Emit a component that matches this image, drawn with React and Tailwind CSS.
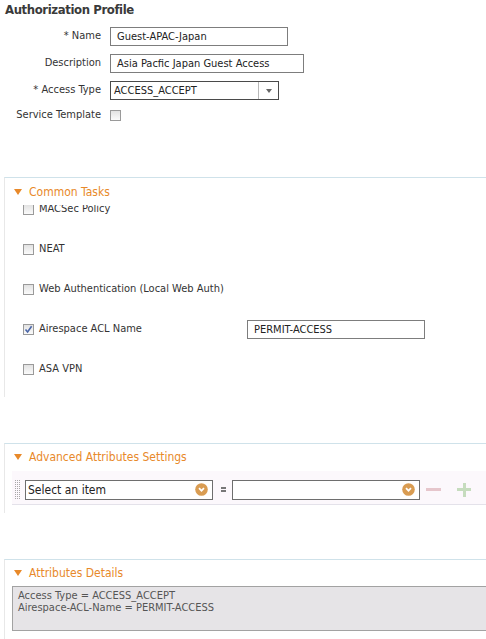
import React from "react";

const font = "font-['DejaVu_Sans_Condensed','DejaVu_Sans',sans-serif]";

const Box = ({ checked }) => (
  <span className="w-[11px] h-[11px] shrink-0 border border-[#9a9a9a] bg-linear-to-b from-[#e2e2e2] to-[#fbfbfb] flex items-center justify-center">
    {checked && (
      <svg width="9" height="9" viewBox="0 0 9 9">
        <path d="M1.5 4.5 L3.6 7 L7.6 1.2" fill="none" stroke="#4a66a8" strokeWidth="1.6" />
      </svg>
    )}
  </span>
);

const Tri = () => (
  <svg width="8" height="6" viewBox="0 0 8 6" className="shrink-0">
    <path d="M0 0 H8 L4 6 Z" fill="#e8892a" />
  </svg>
);

const OrangeArrow = () => (
  <svg width="13" height="13" viewBox="0 0 13 13" className="shrink-0">
    <circle cx="6.5" cy="6.5" r="6.3" fill="#d99c52" />
    <path d="M4 5.2 L6.5 7.7 L9 5.2" fill="none" stroke="#fff" strokeWidth="1.7" />
  </svg>
);

// dotted grip at the left of an attribute row
const Grip = () => (
  <svg width="6" height="20" viewBox="0 0 6 20" className="shrink-0">
    {Array.from({ length: 10 }).map((_, r) =>
      [0, 2, 4].map((c) => (
        <rect key={`${r}-${c}`} x={c} y={r * 2} width="1" height="1" fill="#a8a8a8" />
      ))
    )}
  </svg>
);

const Header = ({ title, tall }) => (
  <div className={`${tall ? "h-[27px]" : "h-[26px]"} flex items-center gap-[7px] pl-[9px] text-[12px] text-[#e8892a]`}>
    <Tri />
    <span>{title}</span>
  </div>
);

const Row = ({ label, children }) => (
  <div className="h-[19px] flex items-center">
    <div className="w-[101px] text-right text-[11px] text-[#333]">{label}</div>
    <div className="ml-[9px] flex items-center">{children}</div>
  </div>
);

const Task = ({ label, checked, children }) => (
  <div className="h-[40px] flex items-center pl-[18px]">
    <Box checked={checked} />
    <span className="ml-[5px] w-[208px] text-[11px] text-[#333]">{label}</span>
    {children}
  </div>
);

export default function App() {
  return (
    <div className={`w-[486px] h-[639px] overflow-hidden bg-white ${font}`}>
      <div className="h-[24px] pl-[5px] pt-[1px] text-[13px] tracking-[-0.4px] font-bold text-[#3a3a3a] leading-[18px]">
        Authorization Profile
      </div>

      <div className="mt-[3px] flex flex-col gap-[8px]">
        <Row label="* Name">
          <div className="w-[178px] h-[19px] border border-[#7d7d7d] px-[6px] text-[11px] leading-[17px] text-[#222]">
            Guest-APAC-Japan
          </div>
        </Row>
        <Row label="Description">
          <div className="w-[194px] h-[19px] border border-[#7d7d7d] px-[6px] text-[11px] leading-[17px] text-[#222]">
            Asia Pacfic Japan Guest Access
          </div>
        </Row>
        <Row label="* Access Type">
          <div className="w-[169px] h-[19px] border border-[#4a4a4a] flex text-[11px] leading-[17px] text-[#222]">
            <span className="flex-1 pl-[3px]">ACCESS_ACCEPT</span>
            <span className="w-[20px] border-l border-[#b8b8b8] flex items-center justify-center">
              <svg width="6" height="4" viewBox="0 0 6 4">
                <path d="M0 0 H6 L3 4 Z" fill="#666" />
              </svg>
            </span>
          </div>
        </Row>
      </div>

      <div className="mt-[9px] h-[12px] flex items-center">
        <div className="w-[101px] text-right text-[11px] text-[#333]">Service Template</div>
        <div className="ml-[9px]">
          <Box />
        </div>
      </div>

      <div className="mt-[56px] ml-[4px] border-l border-[#e8e8e8] border-t border-t-[#cfe2ea]">
        <Header title="Common Tasks" tall />
        <div className="h-[192px] overflow-hidden">
          <div className="-mt-[16px]">
            <Task label="MACSec Policy" />
            <Task label="NEAT" />
            <Task label="Web Authentication (Local Web Auth)" />
            <Task label="Airespace ACL Name" checked>
              <div className="w-[178px] h-[19px] border border-[#7d7d7d] px-[6px] text-[11px] leading-[17px] text-[#222]">
                PERMIT-ACCESS
              </div>
            </Task>
            <Task label="ASA VPN" />
          </div>
        </div>
      </div>

      <div className="mt-[46px] ml-[4px] border-l border-[#e8e8e8] border-t border-t-[#cfe2ea] pb-[8px]">
        <Header title="Advanced Attributes Settings" />
        <div className="ml-[7px] mt-[1px] h-[34px] pt-[4px] bg-[#fcf8fc] border-b border-[#e4e2ea] flex items-center">
          <div className="ml-[3px]">
            <Grip />
          </div>
          <div className="ml-[4px] w-[188px] h-[20px] border border-[#6e6e6e] bg-white flex items-center pr-[4px]">
            <span className="flex-1 pl-[2px] text-[12px] text-[#222]">Select an item</span>
            <OrangeArrow />
          </div>
          <span className="ml-[8px] w-[5px] h-[5px] border-y-2 border-[#777]" />
          <div className="ml-[6px] w-[188px] h-[20px] border border-[#6e6e6e] bg-white flex items-center justify-end pr-[4px]">
            <OrangeArrow />
          </div>
          <span className="ml-[6px] w-[15px] h-[3px] bg-[#e6c6cc]" />
          <span className="ml-[16px] relative w-[14px] h-[14px]">
            <span className="absolute left-0 top-[5.5px] w-[14px] h-[3px] bg-[#c6dcbe]" />
            <span className="absolute top-0 left-[5.5px] w-[3px] h-[14px] bg-[#c6dcbe]" />
          </span>
        </div>
      </div>

      <div className="mt-[46px] ml-[4px] h-[200px] border-l border-[#e8e8e8] border-t border-t-[#cfe2ea]">
        <Header title="Attributes Details" />
        <div className="ml-[7px] w-[490px] h-[45px] bg-[#e6e4e7] border border-[#a2a2a2] px-[5px] pt-[3px] text-[11px] leading-[12px] text-[#555]">
          <div>Access Type = ACCESS_ACCEPT</div>
          <div>Airespace-ACL-Name = PERMIT-ACCESS</div>
        </div>
      </div>
    </div>
  );
}
